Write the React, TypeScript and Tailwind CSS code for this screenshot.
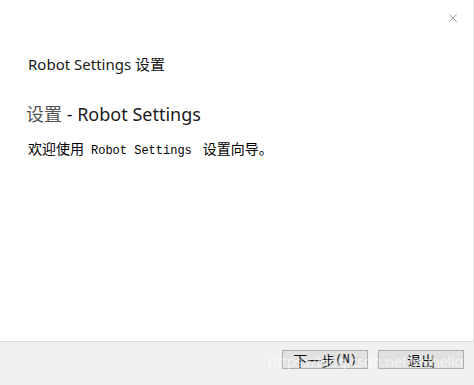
import { X } from 'lucide-react';

function DialogButton({ children }: { children: React.ReactNode }) {
  return (
    <button className="flex h-[19px] w-[86px] items-center justify-center border border-[#adadad] bg-[#e1e1e1] text-[14px] leading-none text-[#111]">
      {children}
    </button>
  );
}

export default function App() {
  return (
    <div className="flex h-[385px] w-[474px] flex-col overflow-hidden bg-white font-['Noto_Sans','Noto_Sans_CJK_SC',sans-serif]">
      <main className="relative flex-1 border-r border-[#e4e4e4] px-[28px] pt-[54px]">
        <button className="absolute top-[11px] right-[13px] text-[#7a7a7a]">
          <X size={14} strokeWidth={1.2} />
        </button>

        <h1 className="text-[15px] leading-[20px] text-[#1a1a1a]">Robot Settings 设置</h1>

        <h2 className="mt-[27px] -ml-[2px] text-[18px] leading-[24px] text-[#1a1a1a]">
          <span className="font-['Noto_Sans_CJK_SC',sans-serif] text-[#555]">设置</span> - Robot Settings
        </h2>

        <p className="mt-[12px] flex items-baseline font-['Noto_Sans_CJK_SC',sans-serif] text-[14px] leading-[20px] text-black">
          <span>欢迎使用</span>
          <span className="mr-[11px] ml-[7px] font-['Liberation_Mono',monospace] text-[12px]">Robot Settings</span>
          <span>设置向导。</span>
        </p>
      </main>

      <footer className="relative flex h-[44px] items-start justify-end gap-[10px] border-t border-[#dfdfdf] bg-[#f0f0f0] pt-[8px] pr-[10px] font-['Noto_Sans_CJK_SC',sans-serif]">
        <DialogButton>
          下一步<span className="font-['Liberation_Mono',monospace] text-[12px]">(N)</span>
        </DialogButton>
        <DialogButton>退出</DialogButton>
        <span className="pointer-events-none absolute top-[8px] right-[11px] font-['Noto_Sans',sans-serif] text-[15px] leading-[22px] tracking-tight text-white/60">
          https://blog.csdn.net/wzhello
        </span>
      </footer>
    </div>
  );
}
